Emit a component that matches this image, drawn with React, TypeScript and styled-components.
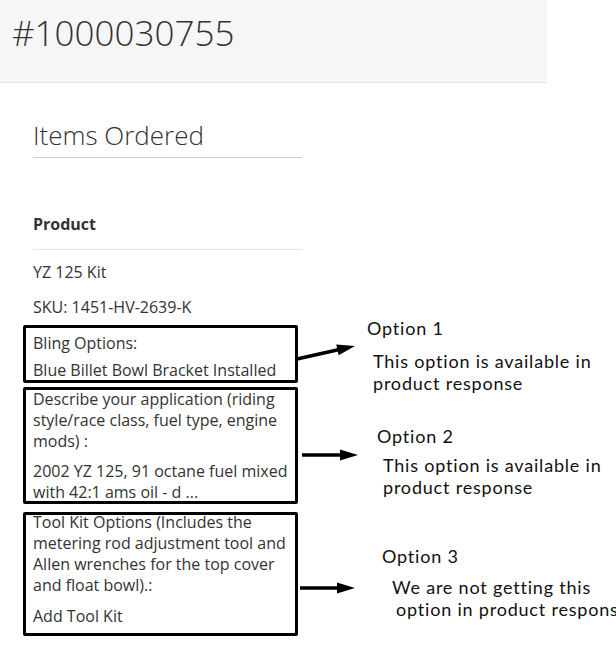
import React from "react";
import styled, { createGlobalStyle } from "styled-components";

interface optionType {
  label: string;
  value: string;
  height: number;
  top: number;
  labelTop: number;
  gap: number;
}

interface calloutType {
  title: string;
  lines: { text: string; indent: number }[];
  top: number;
  noteLeft: number;
  bodyTop: number;
  arrow: { w: number; top: number; left: number; x1: number; y1: number; x2: number; y2: number };
}

const options: optionType[] = [
  {
    label: "Bling Options:",
    value: "Blue Billet Bowl Bracket Installed",
    height: 58,
    top: 0,
    labelTop: 5,
    gap: 6,
  },
  {
    label: "Describe your application (riding style/race class, fuel type, engine mods) :",
    value: "2002 YZ 125, 91 octane fuel mixed with 42:1 ams oil - d ...",
    height: 117,
    top: 4,
    labelTop: -1,
    gap: 9,
  },
  {
    label:
      "Tool Kit Options (Includes the metering rod adjustment tool and Allen wrenches for the top cover and float bowl).:",
    value: "Add Tool Kit",
    height: 124,
    top: 8,
    labelTop: -3,
    gap: 10,
  },
];

const callouts: calloutType[] = [
  {
    title: "Option 1",
    lines: [
      { text: "This option is available in", indent: 6 },
      { text: "product response", indent: 6 },
    ],
    top: -8,
    noteLeft: 9,
    bodyTop: 11,
    arrow: { w: 62, top: 23, left: -2, x1: 1, y1: 19, x2: 59, y2: 6 },
  },
  {
    title: "Option 2",
    lines: [
      { text: "This option is available in", indent: 6 },
      { text: "product response", indent: 6 },
    ],
    top: 31,
    noteLeft: 17,
    bodyTop: 7,
    arrow: { w: 60, top: 18, left: 2, x1: 2, y1: 12, x2: 58, y2: 12 },
  },
  {
    title: "Option 3",
    lines: [
      { text: "We are not getting this", indent: 10 },
      { text: "option in product response", indent: 14 },
    ],
    top: 47,
    noteLeft: 24,
    bodyTop: 9,
    arrow: { w: 60, top: 31, left: 0, x1: 2, y1: 12, x2: 57, y2: 12 },
  },
];

// arrow with a filled head, drawn in its own little svg
function Arrow({ a }: { a: calloutType["arrow"] }) {
  const dx = a.x2 - a.x1;
  const dy = a.y2 - a.y1;
  const len = Math.hypot(dx, dy);
  const ux = dx / len;
  const uy = dy / len;
  const head = 18;
  const half = 5.5;
  const bx = a.x2 - ux * head;
  const by = a.y2 - uy * head;
  const pts = `${a.x2},${a.y2} ${bx - uy * half},${by + ux * half} ${bx + uy * half},${by - ux * half}`;
  return (
    <ArrowSvg $top={a.top} $left={a.left} width={a.w} height={24} viewBox={`0 0 ${a.w} 24`}>
      <line x1={a.x1} y1={a.y1} x2={bx + ux * 3} y2={by + uy * 3} stroke="#000" strokeWidth={3.5} />
      <polygon points={pts} fill="#000" />
    </ArrowSvg>
  );
}

export default function App() {
  return (
    <>
      <GlobalStyle />
      <Page>
        <TitleBar>
          <PageTitle>#1000030755</PageTitle>
        </TitleBar>

        <Content>
          <SectionTitle>Items Ordered</SectionTitle>
          <ColumnHead>Product</ColumnHead>
          <ItemLine $mt={12}>YZ 125 Kit</ItemLine>
          <ItemLine $mt={14}>SKU: 1451-HV-2639-K</ItemLine>

          <Annotated>
            <OptionList>
              {options.map((opt, i) => (
                <OptionBox key={i} $h={opt.height} $mt={opt.top}>
                  <OptionLabel $mt={opt.labelTop}>{opt.label}</OptionLabel>
                  <OptionValue $gap={opt.gap}>{opt.value}</OptionValue>
                </OptionBox>
              ))}
            </OptionList>

            <CalloutList>
              {callouts.map((c, i) => (
                <Callout key={i} $mt={c.top}>
                  <Arrow a={c.arrow} />
                  <Note $ml={c.noteLeft}>
                    <NoteTitle>{c.title}</NoteTitle>
                    <NoteBody $mt={c.bodyTop}>
                      {c.lines.map((l, j) => (
                        <NoteLine key={j} $indent={l.indent}>
                          {l.text}
                        </NoteLine>
                      ))}
                    </NoteBody>
                  </Note>
                </Callout>
              ))}
            </CalloutList>
          </Annotated>
        </Content>
      </Page>
    </>
  );
}

const GlobalStyle = createGlobalStyle`
  html, body {
    margin: 0;
    padding: 0;
    background: #fff;
    overflow: hidden;
  }
  body {
    font-family: "Open Sans", "Liberation Sans", sans-serif;
    font-size: 16px;
    color: #333;
  }
`;

const Page = styled.div`
  width: 616px;
  height: 657px;
  overflow: hidden;
`;

const TitleBar = styled.header`
  box-sizing: border-box;
  width: 547px;
  height: 83px;
  padding: 13px 0 0 12px;
  background: #f6f6f6;
  border-bottom: 1px solid #e3e3e3;
`;

const PageTitle = styled.h1`
  margin: 0;
  font-size: 35px;
  font-weight: 300;
  line-height: 40px;
  color: #333;
`;

const Content = styled.main`
  padding-left: 33px;
`;

const SectionTitle = styled.h2`
  width: 269px;
  margin: 36px 0 0;
  padding-bottom: 6px;
  font-size: 26px;
  font-weight: 300;
  line-height: 32px;
  border-bottom: 1px solid #cccccc;
`;

const ColumnHead = styled.div`
  width: 269px;
  margin-top: 56px;
  padding-bottom: 14px;
  font-weight: 700;
  line-height: 21px;
  border-bottom: 1px solid #e4e4e4;
`;

const ItemLine = styled.div<{ $mt: number }>`
  margin-top: ${(p) => p.$mt}px;
  line-height: 21px;
`;

const Annotated = styled.div`
  display: grid;
  grid-template-columns: 275px 1fr;
  margin: 7px 0 0 -10px;
`;

const OptionList = styled.div`
  display: flex;
  flex-direction: column;
`;

const OptionBox = styled.dl<{ $h: number; $mt: number }>`
  box-sizing: border-box;
  height: ${(p) => p.$h}px;
  margin: ${(p) => p.$mt}px 0 0;
  padding: 0 0 0 7px;
  border: 3px solid #000;
  border-radius: 2px;
`;

const OptionLabel = styled.dt<{ $mt: number }>`
  margin: ${(p) => p.$mt}px 0 0;
  line-height: 21px;
`;

const OptionValue = styled.dd<{ $gap: number }>`
  margin: ${(p) => p.$gap}px 0 0;
  line-height: 21px;
`;

const CalloutList = styled.div`
  display: flex;
  flex-direction: column;
`;

const Callout = styled.div<{ $mt: number }>`
  display: flex;
  align-items: flex-start;
  margin-top: ${(p) => p.$mt}px;
`;

const ArrowSvg = styled.svg<{ $top: number; $left: number }>`
  flex: none;
  display: block;
  margin: ${(p) => p.$top}px 0 0 ${(p) => p.$left}px;
  overflow: visible;
`;

const Note = styled.div<{ $ml: number }>`
  margin-left: ${(p) => p.$ml}px;
  font-family: Lato, "Open Sans", sans-serif;
  font-size: 18px;
  letter-spacing: 0.8px;
  color: #111;
  white-space: nowrap;
`;

const NoteTitle = styled.div`
  line-height: 22px;
`;

const NoteBody = styled.div<{ $mt: number }>`
  margin-top: ${(p) => p.$mt}px;
`;

const NoteLine = styled.div<{ $indent: number }>`
  padding-left: ${(p) => p.$indent}px;
  line-height: 22px;
`;
